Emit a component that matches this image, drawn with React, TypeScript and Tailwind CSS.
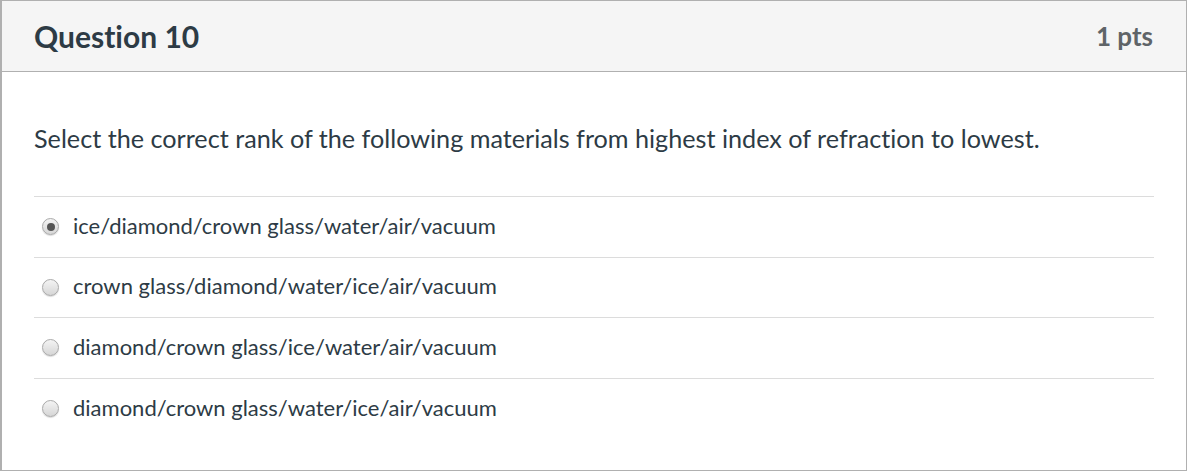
import React from "react";

const answers = [
  "ice/diamond/crown glass/water/air/vacuum",
  "crown glass/diamond/water/ice/air/vacuum",
  "diamond/crown glass/ice/water/air/vacuum",
  "diamond/crown glass/water/ice/air/vacuum",
];

function Radio({ checked }: { checked: boolean }) {
  return (
    <span className="relative inline-flex h-[17px] w-[17px] shrink-0 items-center justify-center rounded-full border border-[#a9a9a9] bg-gradient-to-b from-[#f4f4f4] to-[#d6d6d6] shadow-[0_1px_1px_rgba(0,0,0,0.15)]">
      {checked && <span className="h-[8px] w-[8px] rounded-full bg-[#555]" />}
    </span>
  );
}

export default function App() {
  return (
    <div
      className="h-[473px] w-[1191px] bg-white [font-variant-ligatures:none]"
      style={{ fontFamily: "Lato, 'Open Sans', sans-serif" }}
    >
      <div className="h-[471px] w-[1187px] border border-l-2 border-[#b0b0b0] bg-white">
        <div className="flex h-[71px] items-center justify-between border-b border-[#b0b0b0] bg-[#f5f5f5] pl-[32px] pr-[33px]">
          <span className="text-[30px] font-bold text-[#2d3b45]">Question 10</span>
          <span className="text-[26px] font-bold text-[#5f6468]">1 pts</span>
        </div>
        <div className="px-[32px] pt-[50px]">
          <div className="text-[25.2px] leading-[32px] text-[#2d3b45]">
            Select the correct rank of the following materials from highest index of refraction to lowest.
          </div>
          <div className="mt-[42px] border-t border-[#dcdcdc]">
            {answers.map((a, i) => (
              <div
                key={a}
                className={`flex h-[60.5px] items-center gap-[14px] pl-[8px] ${i < answers.length - 1 ? "border-b border-[#dcdcdc]" : ""}`}
              >
                <Radio checked={i === 0} />
                <span className="pb-[3px] text-[22px] text-[#2d3b45]">{a}</span>
              </div>
            ))}
          </div>
        </div>
      </div>
    </div>
  );
}
